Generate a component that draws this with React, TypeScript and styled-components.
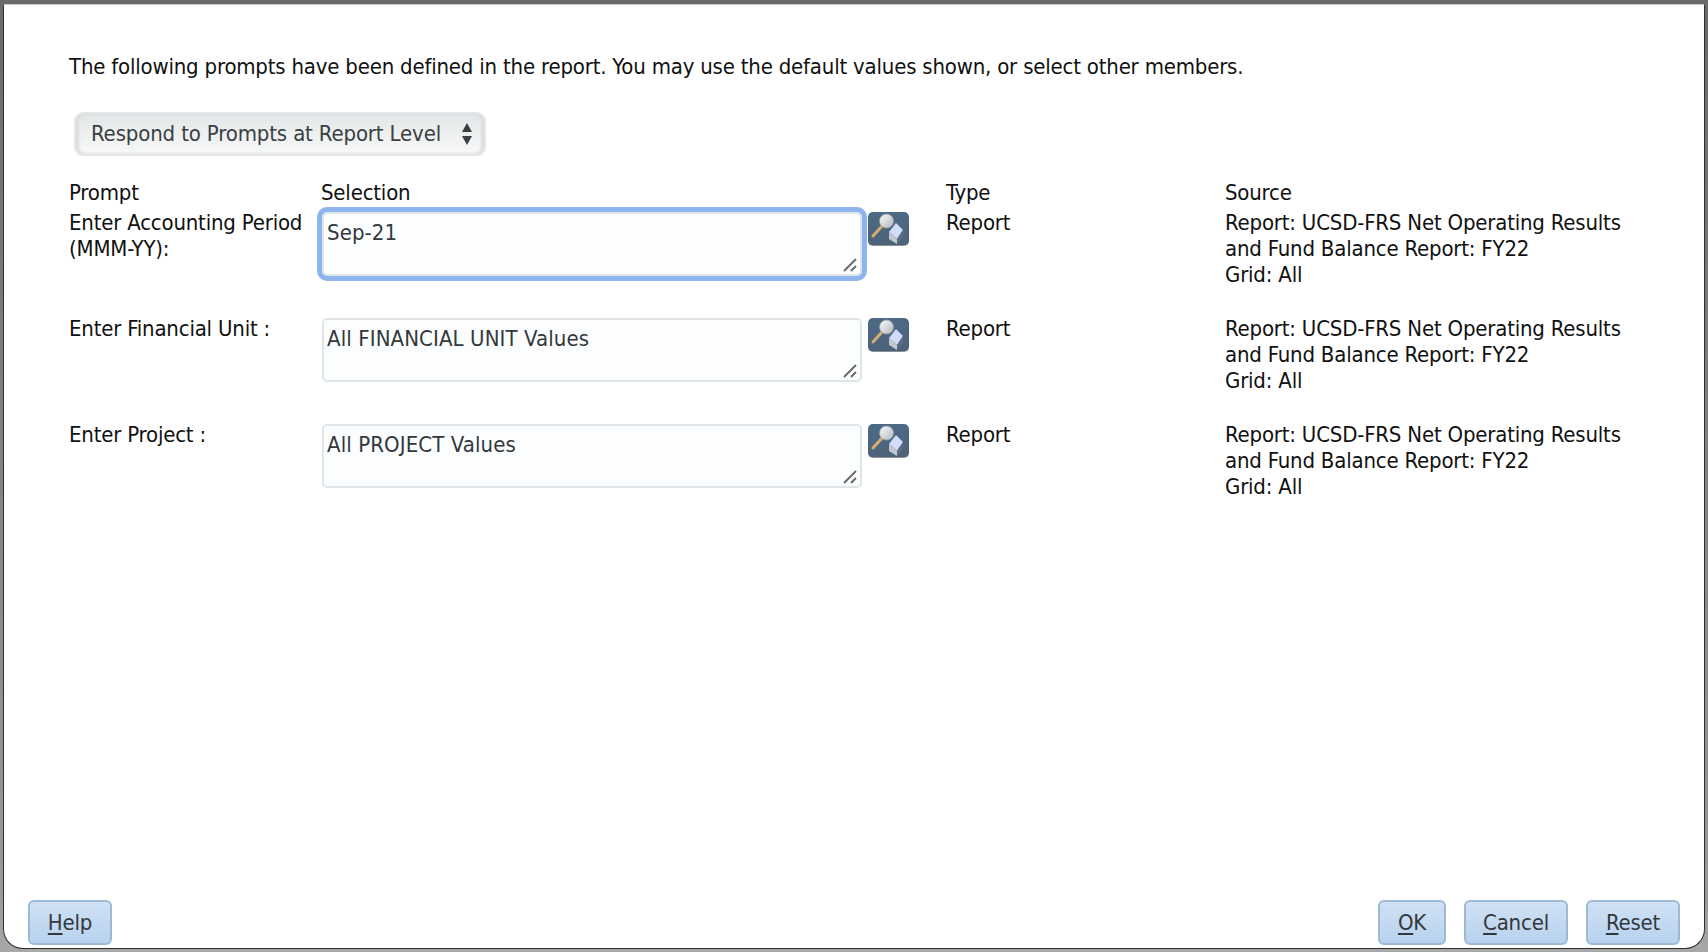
import React from 'react';
import styled, { createGlobalStyle } from 'styled-components';

const GlobalStyle = createGlobalStyle`
  html, body { margin: 0; padding: 0; height: 100%; }
  #root { height: 100%; }
  body { font-family: "DejaVu Sans Condensed", "DejaVu Sans", sans-serif; }
`;

const rows = [
  { label: 'Enter Accounting Period (MMM-YY):', value: 'Sep-21', focused: true },
  { label: 'Enter Financial Unit :', value: 'All FINANCIAL UNIT Values', focused: false },
  { label: 'Enter Project :', value: 'All PROJECT Values', focused: false },
];

const SearchIcon: React.FC = () => (
  <svg width="41" height="34" viewBox="0 0 41 34">
    <defs>
      <linearGradient id="lens" x1="0" y1="0" x2="1" y2="1">
        <stop offset="0" stopColor="#fafafa" />
        <stop offset="1" stopColor="#b4b8bd" />
      </linearGradient>
    </defs>
    <path d="M5 24 L14 14" stroke="#d3ae72" strokeWidth="3" strokeLinecap="round" />
    <circle cx="18.5" cy="9" r="7" fill="url(#lens)" stroke="#9aa1a8" strokeWidth="0.8" />
    <path d="M21 20 L28 11 L35 18 L29 27 Z" fill="#d0dcf8" />
    <path d="M21 20 L29 27 L29 32 L21 27 Z" fill="#c4c8ce" />
    <path d="M29 27 L35 18 L35 25 L29 32 Z" fill="#5d6d80" />
  </svg>
);

const App: React.FC = () => (
  <>
    <GlobalStyle />
    <Page>
      <Dialog>
        <Main>
          <Intro>
            The following prompts have been defined in the report. You may use the default values
            shown, or select other members.
          </Intro>
          <LevelSelect type="button">
            Respond to Prompts at Report Level
            <Arrows width="10" height="22" viewBox="0 0 10 22">
              <path d="M5 0 L10 9 L0 9 Z M0 13 L10 13 L5 22 Z" fill="#3b3f44" />
            </Arrows>
          </LevelSelect>
          <Grid>
            <Head>Prompt</Head>
            <Head>Selection</Head>
            <span />
            <Head>Type</Head>
            <Head>Source</Head>
            {rows.map((row) => (
              <React.Fragment key={row.label}>
                <Cell>{row.label}</Cell>
                <FieldWrap>
                  <Field $focused={row.focused} defaultValue={row.value} spellCheck={false} />
                  <Grip width="14" height="14" viewBox="0 0 14 14">
                    <path d="M1 13 L13 1 M8 13 L13 8" stroke="#666" strokeWidth="1.8" />
                  </Grip>
                </FieldWrap>
                <IconCell>
                  <IconButton type="button" aria-label="Search">
                    <SearchIcon />
                  </IconButton>
                </IconCell>
                <Cell>Report</Cell>
                <SourceCell>
                  Report: UCSD-FRS Net Operating Results and Fund Balance Report: FY22
                  <br />
                  Grid: All
                </SourceCell>
              </React.Fragment>
            ))}
          </Grid>
        </Main>
        <Footer>
          <Action type="button"><u>H</u>elp</Action>
          <RightActions>
            <Action type="button" $w={68}><u>O</u>K</Action>
            <Action type="button" $w={104}><u>C</u>ancel</Action>
            <Action type="button" $w={94}><u>R</u>eset</Action>
          </RightActions>
        </Footer>
      </Dialog>
    </Page>
  </>
);

export default App;

const Page = styled.div`
  height: 952px;
  box-sizing: border-box;
  padding: 4px 3px 3px 3px;
  background: linear-gradient(180deg, #6a6a6a 0, #6a6a6a 4px, #9a9a9a 900px, #a8a8a8 100%);
`;
const Dialog = styled.div`
  height: 100%;
  box-sizing: border-box;
  display: flex;
  flex-direction: column;
  background: #fff;
  border: 1px solid #2f2f2f;
  border-top-color: #c9c9c9;
  border-radius: 0 0 20px 20px;
  color: #111;
  font-size: 22px;
  line-height: 26px;
  letter-spacing: -0.2px;
`;
const Main = styled.div`
  flex: 1;
  padding: 49px 0 0 65px;
`;
const Intro = styled.p`
  margin: 0;
`;
const LevelSelect = styled.button`
  display: flex;
  align-items: center;
  justify-content: space-between;
  box-sizing: border-box;
  width: 412px;
  height: 44px;
  margin: 32px 0 0 5px;
  padding: 0 12px 0 15px;
  border: 2px solid #e3e7e8;
  border-radius: 9px;
  background: linear-gradient(180deg, #e3e6e7 0, #eef0f0 50%, #f7f8f8 100%);
  box-shadow: inset 3px 0 3px #d9dcdd, inset -3px 0 3px #d9dcdd;
  color: #3a3f44;
  font: inherit;
  letter-spacing: -0.15px;
  white-space: nowrap;
`;
const Arrows = styled.svg`
  flex: none;
`;
const Grid = styled.div`
  display: grid;
  grid-template-columns: 252px 546px 79px 279px 440px;
  margin-top: 24px;
`;
const Head = styled.div`
  height: 30px;
`;
const Cell = styled.div`
  padding-bottom: 28px;
`;
const SourceCell = styled(Cell)`
  max-width: 425px;
`;
const FieldWrap = styled.div`
  position: relative;
  width: 540px;
  height: 64px;
  margin: 2px 0 0 1px;
`;
const Field = styled.textarea<{ $focused: boolean }>`
  display: block;
  box-sizing: border-box;
  width: 100%;
  height: 100%;
  margin: 0;
  padding: 6px 3px;
  border: 2px solid #e0e6e8;
  border-radius: 5px;
  background: #fbfdfe;
  color: #33383c;
  font: inherit;
  letter-spacing: 0.1px;
  outline: none;
  resize: none;
  box-shadow: ${(p) => (p.$focused ? '0 0 0 5px #8eb4f0' : 'none')};
`;
const Grip = styled.svg`
  position: absolute;
  right: 5px;
  bottom: 4px;
`;
const IconCell = styled.div`
  padding: 2px 0 0 1px;
`;
const IconButton = styled.button`
  display: block;
  width: 41px;
  height: 34px;
  padding: 0;
  border: none;
  border-bottom: 1px solid #8c8f92;
  border-radius: 5px;
  background: linear-gradient(180deg, #4c6a85, #4d627a);
`;
const Footer = styled.div`
  display: flex;
  justify-content: space-between;
  padding: 0 24px 3px 24px;
`;
const RightActions = styled.div`
  display: flex;
  gap: 18px;
`;
const Action = styled.button<{ $w?: number }>`
  box-sizing: border-box;
  width: ${(p) => p.$w ?? 84}px;
  height: 45px;
  padding: 0;
  border: 2px solid #9cbad8;
  border-radius: 6px;
  background: linear-gradient(180deg, #d0e1f4, #b8d2ee);
  color: #33383c;
  font: inherit;
  letter-spacing: inherit;
  u { text-underline-offset: 3px; }
`;
